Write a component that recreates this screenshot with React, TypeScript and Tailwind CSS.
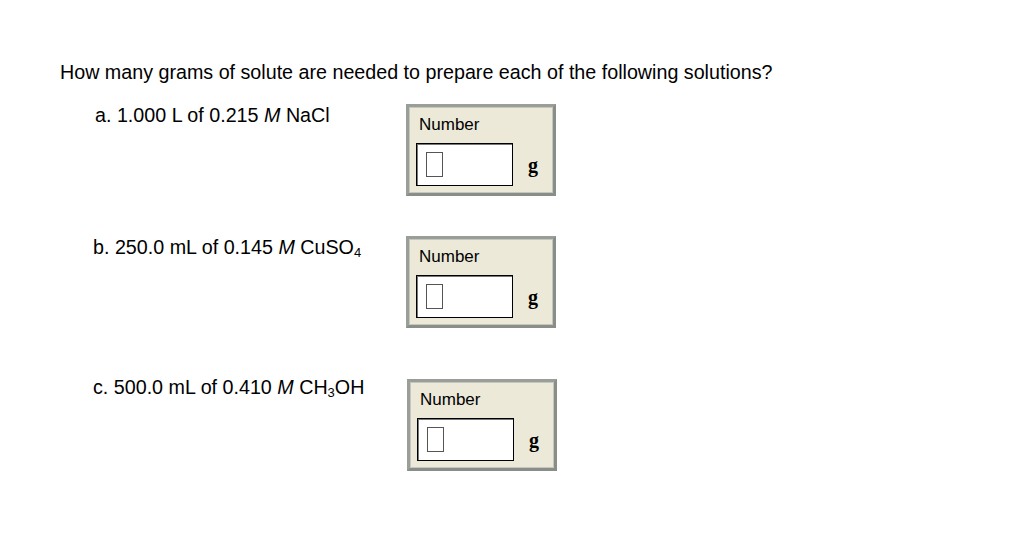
const ROWS = [
  { key: "a", amount: "1.000 L", conc: "0.215", solute: <>NaCl</>, rowGap: "mt-[22px]", labelPad: "pl-[35px] pt-px", boxPad: "" },
  { key: "b", amount: "250.0 mL", conc: "0.145", solute: <>CuSO<sub className="text-[13px]">4</sub></>, rowGap: "mt-[40px]", labelPad: "pl-[33px] pt-px", boxPad: "" },
  { key: "c", amount: "500.0 mL", conc: "0.410", solute: <>CH<sub className="text-[13px]">3</sub>OH</>, rowGap: "mt-[49px]", labelPad: "pl-[33px]", boxPad: "mt-[2px] ml-px" },
];

function AnswerBox() {
  return (
    <div className="w-[150px] h-[92px] border-[3px] border-t-[#9a9e98] border-l-[#9a9e98] border-r-[#8a8e88] border-b-[#8a8e88] bg-[#ece9d9] shadow-[inset_0_0_0_1px_#c4c6bf]">
      <div className="pl-[10px] pt-[9px] text-[17px] leading-none text-black">Number</div>
      <div className="flex items-center mt-[10px] pl-[7px]">
        <div className="w-[97px] h-[43px] bg-white border border-black shadow-[inset_1px_1px_0_#777] flex items-center pl-[9px]">
          <div className="w-[17px] h-[25px] border border-[#555] bg-white" />
        </div>
        <span className="ml-[15px] font-['Liberation_Serif',serif] font-bold text-[20px] leading-none">g</span>
      </div>
    </div>
  );
}

export default function App() {
  return (
    <div className="w-[1024px] h-[543px] bg-white text-black font-['Liberation_Sans',Arial,sans-serif]">
      <div className="pl-[60px] pt-[62px]">
        <p className="text-[19.7px] leading-[20px]">
          How many grams of solute are needed to prepare each of the following solutions?
        </p>
        <div className="flex flex-col">
          {ROWS.map((row) => (
            <div key={row.key} className={`flex ${row.rowGap}`}>
              <div className={`w-[346px] text-[19.7px] leading-[20px] ${row.labelPad}`}>
                {row.key}. {row.amount} of {row.conc} <i>M</i> {row.solute}
              </div>
              <div className={row.boxPad}>
                <AnswerBox />
              </div>
            </div>
          ))}
        </div>
      </div>
    </div>
  );
}
